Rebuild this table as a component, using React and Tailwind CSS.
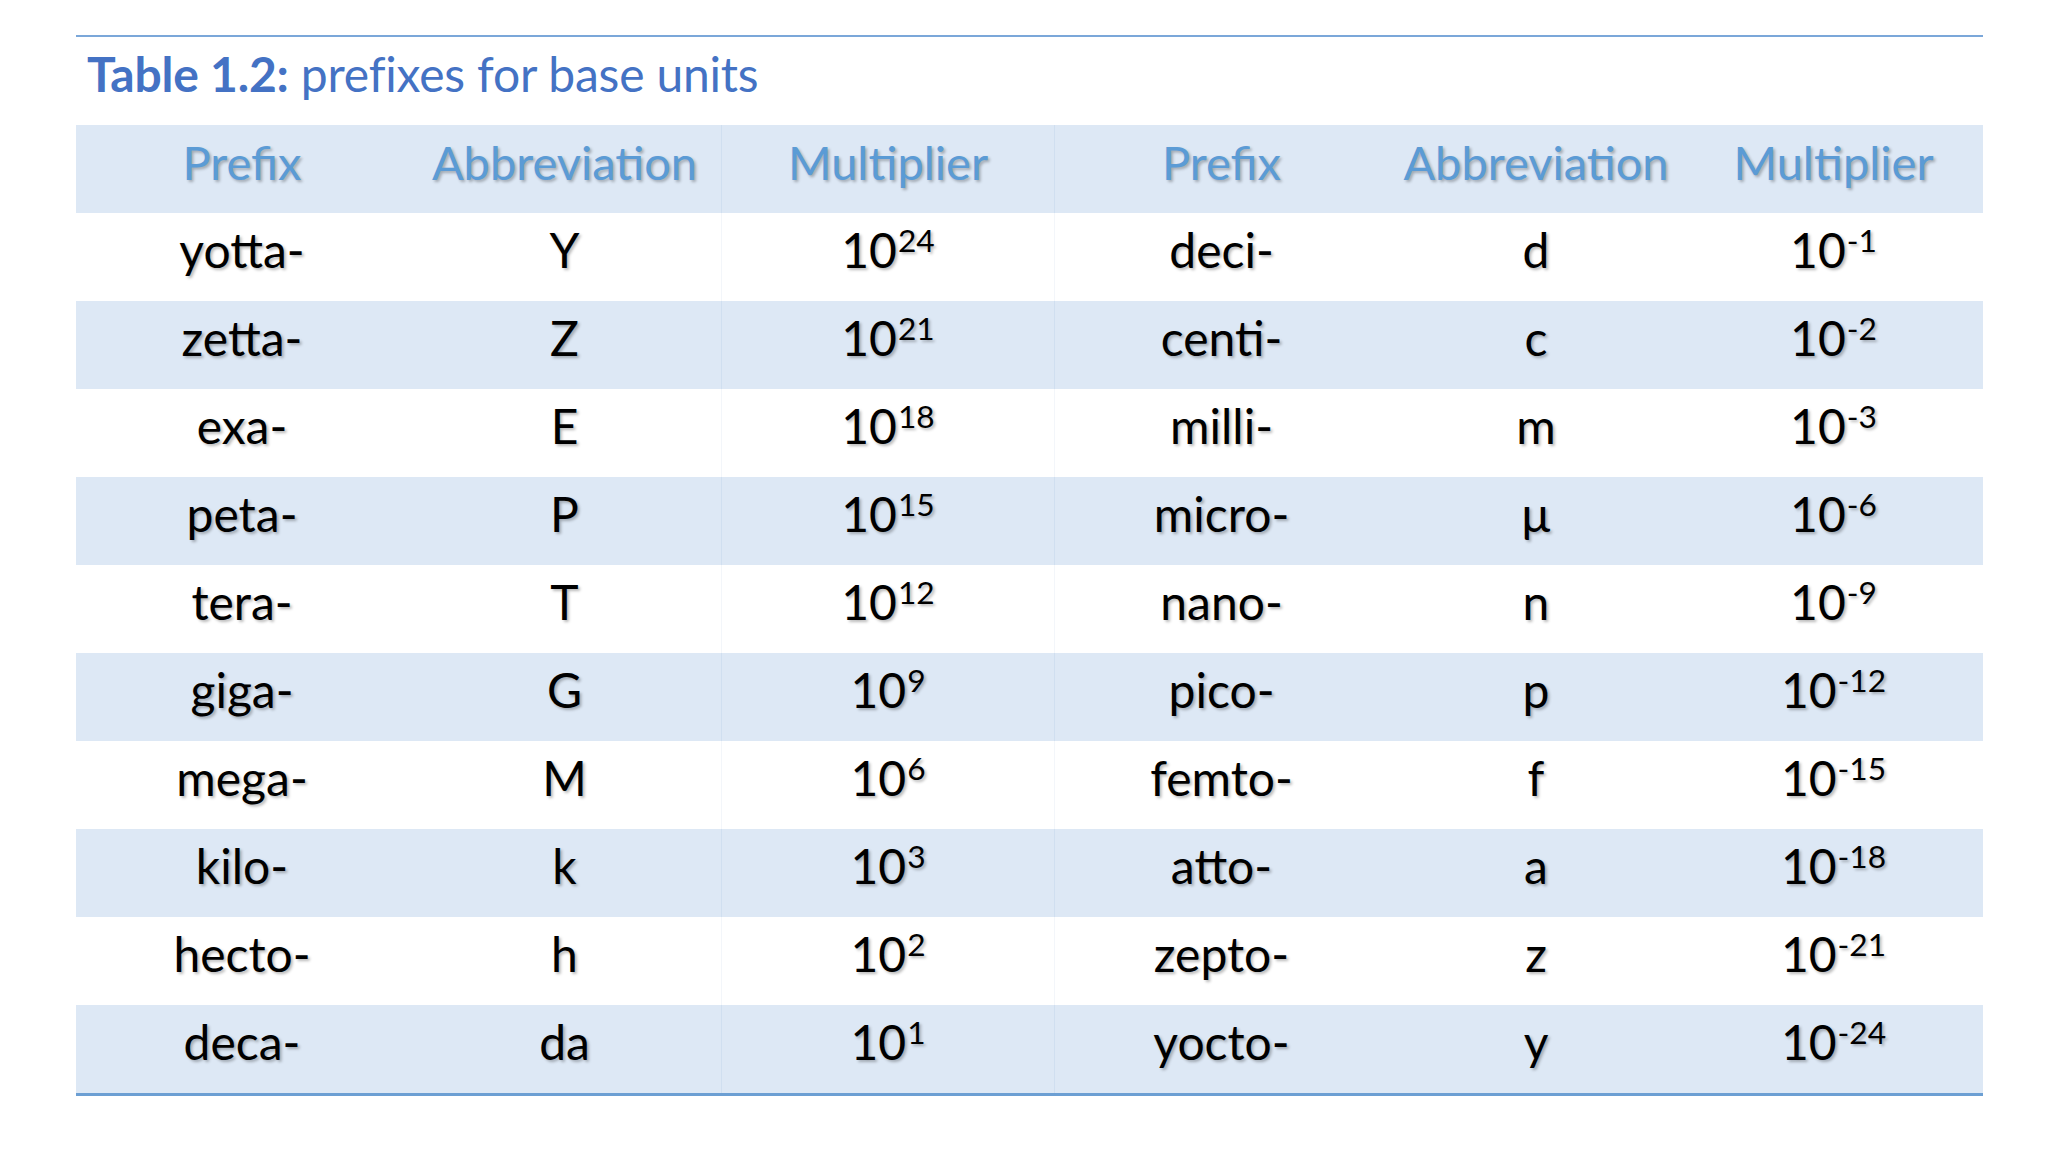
import React from 'react';

const rows = [
  ['yotta-', 'Y', '24', 'deci-', 'd', '-1'],
  ['zetta-', 'Z', '21', 'centi-', 'c', '-2'],
  ['exa-', 'E', '18', 'milli-', 'm', '-3'],
  ['peta-', 'P', '15', 'micro-', 'µ', '-6'],
  ['tera-', 'T', '12', 'nano-', 'n', '-9'],
  ['giga-', 'G', '9', 'pico-', 'p', '-12'],
  ['mega-', 'M', '6', 'femto-', 'f', '-15'],
  ['kilo-', 'k', '3', 'atto-', 'a', '-18'],
  ['hecto-', 'h', '2', 'zepto-', 'z', '-21'],
  ['deca-', 'da', '1', 'yocto-', 'y', '-24'],
];

const headers = ['Prefix', 'Abbreviation', 'Multiplier', 'Prefix', 'Abbreviation', 'Multiplier'];

const cols = 'grid grid-cols-[332px_313px_333px_334px_296px_299px]';
const shadow = '[text-shadow:2px_2px_3px_rgba(0,0,0,0.28)]';

function Power({ exp }) {
  return (
    <span className="whitespace-nowrap">
      10<sup className="text-[0.66em] relative top-[-0.5em] align-baseline ml-[1px]">{exp}</sup>
    </span>
  );
}

function Cell({ i, children, blue, pad }) {
  const divider = i === 2 || i === 3;
  return (
    <div
      className={`flex items-center justify-center h-[88px] ${pad} ${
        divider ? (blue ? 'border-l border-[#d0dff0]' : 'border-l border-[#f3f6fa]') : ''
      }`}
    >
      {children}
    </div>
  );
}

export default function App() {
  return (
    <div className="w-full h-[1152px] bg-white pt-[35px] pl-[76px] font-['Lato','Liberation_Sans',sans-serif]">
      <div className="w-[1907px]">
        <div className="border-t-2 border-[#7ba7d9]" />
        <div className="h-[88px] flex items-center pl-[11px] pb-[14px] text-[48px] text-[#4472c4] tracking-[-0.2px]">
          <span className="font-bold">Table 1.2:</span>
          <span className="ml-[12px]">prefixes for base units</span>
        </div>
        <div className="border-t-[3px] border-[#5b9bd5]" />
        <div className={`${cols} bg-[#dde8f5] text-[47px] text-[#5b9bd5] ${shadow} mt-[-3px]`}>
          {headers.map((h, i) => (
            <Cell key={i} i={i} blue pad="pb-[14px]">
              {h}
            </Cell>
          ))}
        </div>
        {rows.map((r, ri) => {
          const blue = ri % 2 === 1;
          return (
            <div
              key={ri}
              className={`${cols} text-[48px] text-black ${shadow} ${blue ? 'bg-[#dde8f5]' : 'bg-white'}`}
            >
              {r.map((c, i) => (
                <Cell key={i} i={i} blue={blue} pad="pb-[14px]">
                  {i === 2 || i === 5 ? <Power exp={c} /> : c}
                </Cell>
              ))}
            </div>
          );
        })}
        <div className="border-t-[3px] border-[#6c9fd3]" />
      </div>
    </div>
  );
}
